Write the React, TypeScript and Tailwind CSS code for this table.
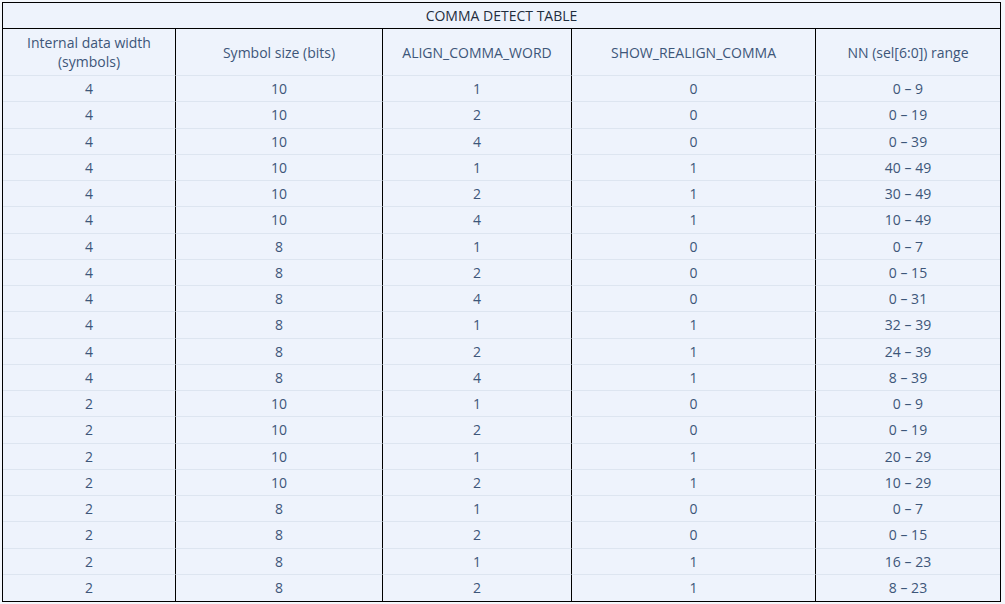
const headers = [
  ["Internal data width", "(symbols)"],
  ["Symbol size (bits)"],
  ["ALIGN_COMMA_WORD"],
  ["SHOW_REALIGN_COMMA"],
  ["NN (sel[6:0]) range"],
];

const rows: [string, string, string, string, string][] = [
  ["4", "10", "1", "0", "0 – 9"],
  ["4", "10", "2", "0", "0 – 19"],
  ["4", "10", "4", "0", "0 – 39"],
  ["4", "10", "1", "1", "40 – 49"],
  ["4", "10", "2", "1", "30 – 49"],
  ["4", "10", "4", "1", "10 – 49"],
  ["4", "8", "1", "0", "0 – 7"],
  ["4", "8", "2", "0", "0 – 15"],
  ["4", "8", "4", "0", "0 – 31"],
  ["4", "8", "1", "1", "32 – 39"],
  ["4", "8", "2", "1", "24 – 39"],
  ["4", "8", "4", "1", "8 – 39"],
  ["2", "10", "1", "0", "0 – 9"],
  ["2", "10", "2", "0", "0 – 19"],
  ["2", "10", "1", "1", "20 – 29"],
  ["2", "10", "2", "1", "10 – 29"],
  ["2", "8", "1", "0", "0 – 7"],
  ["2", "8", "2", "0", "0 – 15"],
  ["2", "8", "1", "1", "16 – 23"],
  ["2", "8", "2", "1", "8 – 23"],
];

// vertical black rule on the right of every column but the last
const colBorder = [
  "border-r border-r-black",
  "border-r border-r-black",
  "border-r border-r-black",
  "border-r border-r-black",
  "",
];

export default function App() {
  return (
    <div
      className="w-[1005px] h-[604px] bg-[#f3f6fb] pt-[2px] pl-[2px]"
      style={{ fontFamily: '"Open Sans", "Liberation Sans", sans-serif' }}
    >
      <div className="w-[999px] border border-black bg-[#eef3fc] text-[14px] text-[#3d5679]">
        {/* Title */}
        <div className="h-[26px] flex items-center justify-center border-b border-black text-[#1f2d3d]">
          COMMA DETECT TABLE
        </div>

        <div className="grid grid-cols-[173px_207px_189px_244px_1fr]">
          {/* Header row */}
          {headers.map((h, i) => (
            <div
              key={i}
              className={`h-[47px] flex flex-col items-center justify-center leading-[19px] border-b border-b-[#dde5f0] ${colBorder[i]}`}
            >
              {h.map((line) => (
                <span key={line}>{line}</span>
              ))}
            </div>
          ))}

          {/* Data rows */}
          {rows.map((r, ri) =>
            r.map((cell, ci) => (
              <div
                key={`${ri}-${ci}`}
                className={`h-[26.26px] flex items-center justify-center ${
                  ri < rows.length - 1 ? "border-b border-b-[#dde5f0]" : ""
                } ${colBorder[ci]}`}
              >
                {cell}
              </div>
            ))
          )}
        </div>
      </div>
    </div>
  );
}
